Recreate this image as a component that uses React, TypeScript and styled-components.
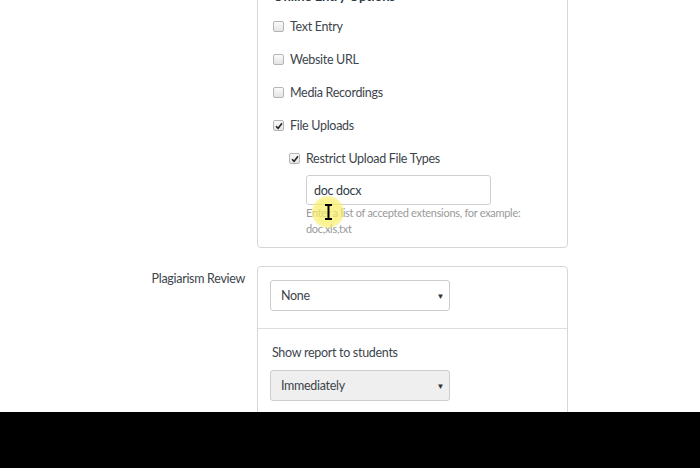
import React from "react";
import styled, { createGlobalStyle } from "styled-components";

const GlobalStyle = createGlobalStyle`
  html, body {
    margin: 0;
    padding: 0;
    background: #ffffff;
  }
  body {
    font-family: Lato, "Open Sans", "Liberation Sans", sans-serif;
    color: #3d454c;
  }
`;

const Screen = styled.div`
  width: 700px;
  height: 468px;
  display: flex;
  flex-direction: column;
  overflow: hidden;
`;

const Viewport = styled.div`
  position: relative;
  height: 412px;
  overflow: hidden;
  background: #fff;
`;

const Form = styled.div`
  margin-top: -30px;
  display: flex;
  flex-direction: column;
  gap: 18px;
`;

const FormRow = styled.div`
  display: grid;
  grid-template-columns: 245px 311px;
  column-gap: 12px;
  align-items: start;
`;

const RowLabel = styled.div`
  padding-top: 6px;
  text-align: right;
  font-size: 12.5px;
  letter-spacing: -0.3px;
  line-height: 14px;
  color: #3d454c;
`;

const Box = styled.div`
  border: 1px solid #d6d6d6;
  border-radius: 4px;
  background: #fff;
`;

const Fieldset = styled(Box)`
  padding: 16px 15px 10px 15px;
`;

const Legend = styled.div`
  font-size: 13px;
  font-weight: 700;
  line-height: 18px;
  margin-bottom: 5px;
  color: #2d3b45;
`;

const CheckRow = styled.label<{ $indent?: boolean }>`
  display: flex;
  align-items: center;
  gap: 6px;
  height: 33px;
  padding-left: ${(p) => (p.$indent ? "16px" : "0")};
  font-size: 12.5px;
  letter-spacing: -0.3px;
  color: #3d454c;
`;

const Box10 = styled.span<{ $checked?: boolean }>`
  width: 9px;
  height: 9px;
  border: 1px solid #b5b5b5;
  border-radius: 2px;
  background: linear-gradient(#fbfbfb, #e4e4e4);
  display: flex;
  align-items: center;
  justify-content: center;
  flex: none;
`;

const Nested = styled.div`
  padding-left: 33px;
`;

const TextInput = styled.div`
  width: 176px;
  height: 28px;
  border: 1px solid #cfcfcf;
  border-radius: 3px;
  display: flex;
  align-items: center;
  padding-left: 7px;
  font-size: 12.5px;
  letter-spacing: -0.3px;
  color: #2d3b45;
`;

const Help = styled.div`
  font-size: 11px;
  letter-spacing: -0.3px;
  line-height: 16px;
  color: #9a9a9a;
  width: 230px;
`;

const Section = styled.div<{ $divider?: boolean }>`
  padding: ${(p) => (p.$divider ? "16px 12px 30px" : "13px 12px 17px")};
  border-top: ${(p) => (p.$divider ? "1px solid #dedede" : "none")};
`;

const SectionLabel = styled.div`
  font-size: 12.5px;
  letter-spacing: -0.3px;
  line-height: 16px;
  padding-left: 2px;
  margin-bottom: 9px;
  color: #3d454c;
`;

const Select = styled.div<{ $muted?: boolean }>`
  height: 29px;
  width: 163px;
  border: 1px solid #cdcdcd;
  border-radius: 3px;
  background: ${(p) => (p.$muted ? "#efefef" : "#fff")};
  display: flex;
  align-items: center;
  justify-content: space-between;
  padding: 0 5px 0 10px;
  box-sizing: content-box;
  font-size: 12.5px;
  letter-spacing: -0.3px;
  color: #3d454c;
`;

const Caret = styled.span`
  font-size: 8px;
  color: #333;
`;

const Highlight = styled.div`
  position: absolute;
  left: 312px;
  top: 196px;
  width: 32px;
  height: 32px;
  border-radius: 50%;
  background: radial-gradient(circle, rgba(250, 238, 100, 0.7) 55%, rgba(250, 238, 100, 0.2) 100%);
  display: flex;
  align-items: center;
  justify-content: center;
`;

const BlackBar = styled.div`
  flex: 1;
  background: #000;
`;

const Check = () => (
  <svg width="8" height="8" viewBox="0 0 8 8">
    <path d="M1 4.2 L3.1 6.3 L7 1.3" fill="none" stroke="#222" strokeWidth="1.5" />
  </svg>
);

const Cursor = () => (
  <svg width="9" height="16" viewBox="0 0 9 16">
    <path d="M1 1h7M4.5 1v14M1 15h7" stroke="#000" strokeWidth="2" fill="none" />
  </svg>
);

const Checkbox: React.FC<{ checked?: boolean }> = ({ checked }) => (
  <Box10 $checked={checked}>{checked && <Check />}</Box10>
);

const options = [
  { label: "Text Entry", checked: false },
  { label: "Website URL", checked: false },
  { label: "Media Recordings", checked: false },
  { label: "File Uploads", checked: true },
];

const App: React.FC = () => {
  return (
    <>
      <GlobalStyle />
      <Screen>
        <Viewport>
          <Form>
            <FormRow>
              <div />
              <Fieldset>
                <Legend>Online Entry Options</Legend>
                {options.map((o) => (
                  <CheckRow key={o.label}>
                    <Checkbox checked={o.checked} />
                    {o.label}
                  </CheckRow>
                ))}
                <CheckRow $indent>
                  <Checkbox checked />
                  Restrict Upload File Types
                </CheckRow>
                <Nested>
                  <TextInput>doc docx</TextInput>
                  <Help>
                    Enter a list of accepted extensions, for example:
                    <br />
                    doc,xls,txt
                  </Help>
                </Nested>
              </Fieldset>
            </FormRow>
            <FormRow>
              <RowLabel>Plagiarism Review</RowLabel>
              <Box>
                <Section>
                  <Select>
                    None <Caret>▼</Caret>
                  </Select>
                </Section>
                <Section $divider>
                  <SectionLabel>Show report to students</SectionLabel>
                  <Select $muted>
                    Immediately <Caret>▼</Caret>
                  </Select>
                </Section>
              </Box>
            </FormRow>
          </Form>
          <Highlight>
            <Cursor />
          </Highlight>
        </Viewport>
        <BlackBar />
      </Screen>
    </>
  );
};

export default App;
